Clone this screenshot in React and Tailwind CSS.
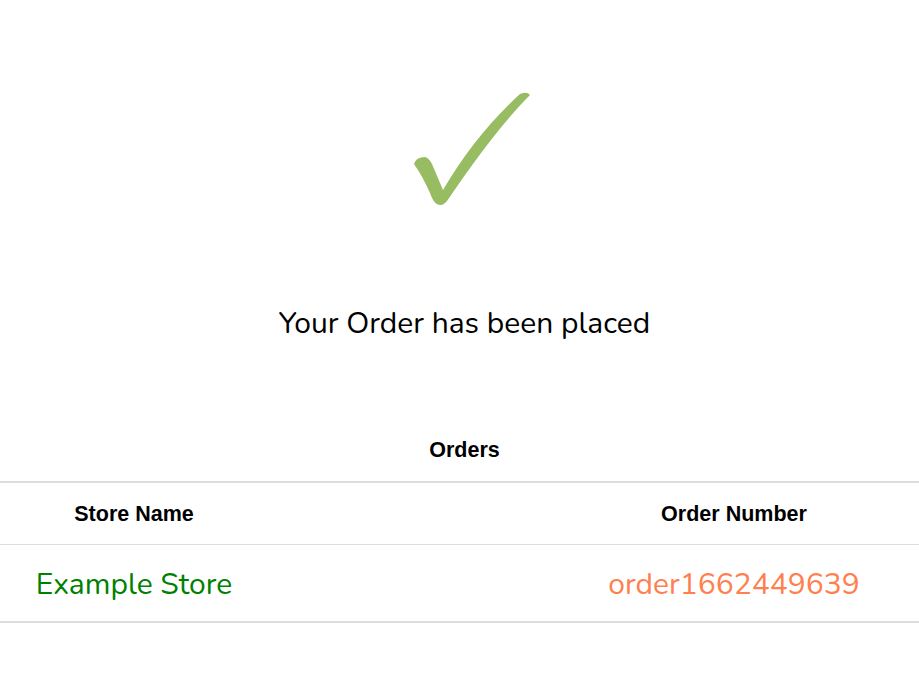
export default function App() {
  return (
    <div className="w-[919px] h-[689px] bg-white overflow-hidden">
      <div className="flex justify-center pt-[80px] pl-[20px]">
        <svg width="140" height="140" viewBox="0 0 140 140">
          <path
            d="M14,84 Q16,77 25,77 Q29,78 32,84 L43,110 Q75,55 120,14 Q127,11 130,15 Q95,50 47,121 Q42,127 37,124 Q33,122 30,113 Q23,97 14,84 Z"
            fill="#97bc62"
          />
        </svg>
      </div>
      <div className="mt-[86px] pl-[10px] text-center text-[30px] leading-[36px] text-black font-['Nunito','Noto_Sans',sans-serif]">
        Your Order has been placed
      </div>
      <div className="mt-[96px] pl-[10px] text-center text-[21.5px] leading-[24px] font-bold text-black font-['Liberation_Sans',Arial,sans-serif]">
        Orders
      </div>
      <div className="mt-[19px] border-t-2 border-b-2 border-[#dddddd]">
        <div className="grid grid-cols-[268px_1fr_370px] h-[62px] pt-[2px] items-center border-b border-[#dddddd] font-['Liberation_Sans',Arial,sans-serif] font-bold text-[21.5px] text-black">
          <div className="text-center">Store Name</div>
          <div></div>
          <div className="text-center">Order Number</div>
        </div>
        <div className="grid grid-cols-[268px_1fr_370px] h-[76px] pt-[2px] items-center text-[30px] font-['Nunito','Noto_Sans',sans-serif]">
          <div className="text-center text-[#008000]">Example Store</div>
          <div></div>
          <div className="text-center text-[#ff7f50]">order1662449639</div>
        </div>
      </div>
    </div>
  );
}
